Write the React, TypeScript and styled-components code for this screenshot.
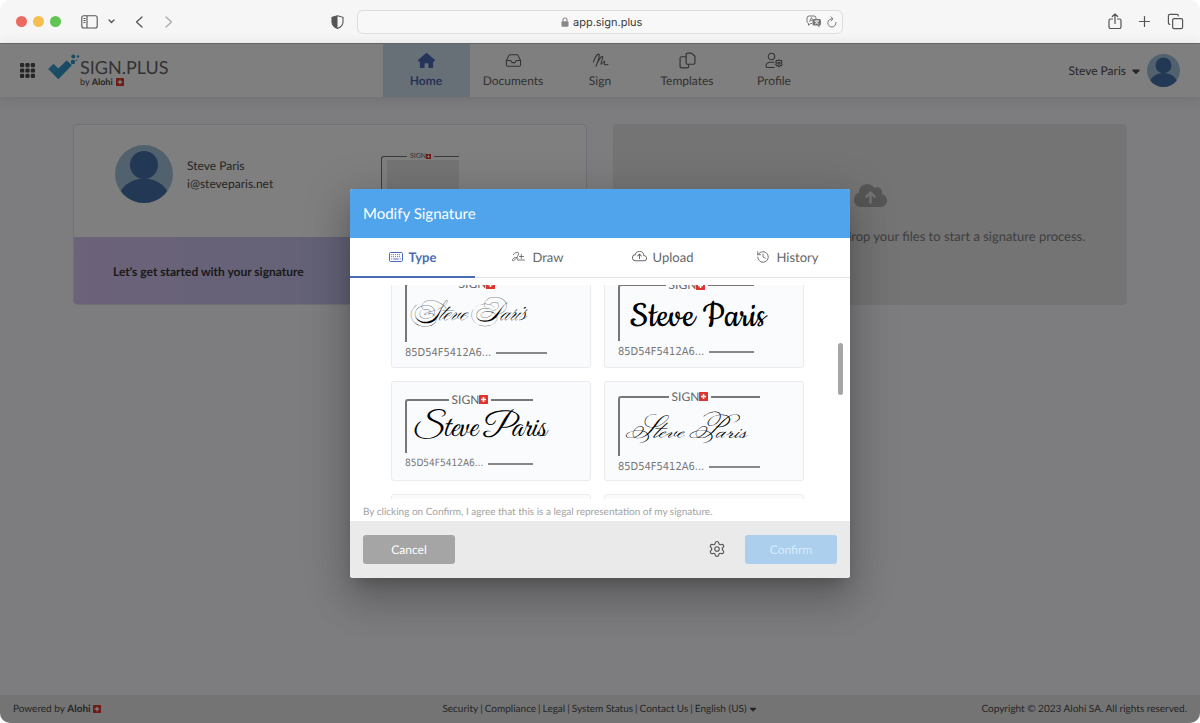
import React, { useLayoutEffect, useRef, useState } from "react";
import styled, { createGlobalStyle, css } from "styled-components";
import { Settings, History, Copy, Inbox, Plus } from "lucide-react";
import { BsCloudArrowUp } from "react-icons/bs";
import { FaCloudArrowUp, FaHouse, FaCaretDown } from "react-icons/fa6";

const Global = createGlobalStyle`
  * { box-sizing: border-box; }
  html, body { margin: 0; background: #fff; }
  body {
    font-family: Lato, "Liberation Sans", sans-serif;
    font-size: 12px;
    color: #4c4c4c;
    text-rendering: geometricPrecision;
  }
  button, input { font: inherit; color: inherit; text-rendering: inherit; }
  button { border: 0; padding: 0; background: none; cursor: pointer; }
  a { color: inherit; text-decoration: none; }
  svg { display: block; flex: none; }
`;

const Window = styled.div`
  display: flex;
  flex-direction: column;
  min-height: 100vh;
  border-radius: 10px;
  overflow: hidden;
`;

/* ---------- browser chrome ---------- */

const Toolbar = styled.div`
  display: grid;
  grid-template-columns: 1fr minmax(200px, 486px) 1fr;
  align-items: center;
  height: 43px;
  padding: 0 16px;
  background: #f6f6f6;
  color: #555;
`;

const ToolbarSide = styled.div<{ $end?: boolean }>`
  display: flex;
  align-items: center;
  ${(p) => p.$end && css`justify-content: flex-end; gap: 14px;`}
`;

const Lights = styled.div`
  display: flex;
  gap: 6px;
  margin-right: 20px;
`;

const Light = styled.span<{ $color: string }>`
  width: 11px;
  height: 11px;
  border-radius: 50%;
  background: ${(p) => p.$color};
`;

const ToolButton = styled.button<{ $faint?: boolean; $left?: number; $right?: number }>`
  display: flex;
  margin-left: ${(p) => p.$left ?? 0}px;
  margin-right: ${(p) => p.$right ?? 0}px;
  color: ${(p) => (p.$faint ? "#aaa" : "#555")};
`;

const Spacer = styled.span`
  flex: 1;
`;

const AddressBar = styled.div`
  display: flex;
  align-items: center;
  height: 24px;
  padding: 0 5px 0 42px;
  border: 1px solid #dfdadc;
  border-radius: 6px;
  background: #f9f8f9;
`;

const Address = styled.label`
  display: flex;
  flex: 1;
  align-items: center;
  justify-content: center;
  gap: 4px;
`;

const AddressInput = styled.input`
  width: 72px;
  padding: 0;
  border: 0;
  outline: 0;
  background: none;
  font-family: Inter, sans-serif;
  font-size: 11px;
  color: #3a3a3a;
`;

/* ---------- application ---------- */

const AppArea = styled.div`
  position: relative;
  display: flex;
  flex: 1;
  flex-direction: column;
  background: #fafafe;
`;

const Header = styled.header`
  display: grid;
  grid-template-columns: 1fr auto 1fr;
  height: 54px;
  padding: 0 20px;
  border-top: 1px solid #ccc;
  background: #fff;
  box-shadow: 0 2px 12px rgba(0, 0, 0, 0.12);
`;

const HeaderSide = styled.div<{ $end?: boolean }>`
  display: flex;
  align-items: center;
  gap: ${(p) => (p.$end ? 5 : 13)}px;
  justify-content: ${(p) => (p.$end ? "flex-end" : "flex-start")};
`;

const Brand = styled.a`
  display: flex;
  align-items: center;
`;

const BrandText = styled.span`
  display: flex;
  flex-direction: column;
  padding-top: 4px;
`;

const BrandName = styled.span`
  font-size: 18px;
  line-height: 18px;
  color: #666;
`;

const BrandBy = styled.span`
  display: flex;
  align-items: center;
  gap: 3px;
  font-size: 9px;
  line-height: 12px;
`;

const Nav = styled.nav`
  display: flex;
`;

const NavItem = styled.a<{ $active?: boolean }>`
  display: flex;
  flex-direction: column;
  align-items: center;
  gap: 4px;
  width: 87px;
  padding-top: 8px;
  font-size: 12px;
  line-height: 15px;
  color: #666;
  ${(p) => p.$active && css`
    background: #cfe0ee;
    color: #4a68b5;
    font-weight: 700;
  `}
`;

const UserMenu = styled.button`
  display: flex;
  align-items: center;
  gap: 4px;
  font-size: 12px;
`;

const Main = styled.main`
  display: grid;
  grid-template-columns: 1fr 1fr;
  align-items: start;
  gap: 26px;
  flex: 1;
  padding: 27px 73px;
`;

const ProfileCard = styled.section`
  height: 181px;
  border-radius: 4px;
  overflow: hidden;
  background: #fff;
  border: 1px solid #e2e2ea;
`;

const ProfileTop = styled.div`
  display: flex;
  align-items: flex-start;
  height: 112px;
  padding: 20px 41px;
`;

const ProfileText = styled.div`
  display: flex;
  flex-direction: column;
  width: 208px;
  padding: 12px 0 0 14px;
  line-height: 18px;
`;

const Preview = styled.div`
  width: 78px;
  padding-top: 11px;
`;

const PreviewBlank = styled.div`
  height: 48px;
  margin-left: 5px;
  background: #e8e8e8;
`;

const Banner = styled.div`
  display: flex;
  align-items: center;
  height: 68px;
  padding: 0 39px;
  background: linear-gradient(90deg, #d8c4f4, #b8c6e8);
  font-weight: 700;
  color: #333;
`;

const DropZone = styled.button`
  display: flex;
  flex-direction: column;
  align-items: center;
  gap: 14px;
  height: 181px;
  padding-top: 55px;
  border-radius: 4px;
  background: #e9e9e9;
  font-size: 13px;
  line-height: 20px;
  color: #808080;
`;

const UploadCloud = styled(FaCloudArrowUp)`
  width: 33px;
  height: 33px;
  color: #acacac;
`;

const Footer = styled.footer`
  display: grid;
  grid-template-columns: 1fr auto 1fr;
  align-items: center;
  height: 28px;
  padding: 0 13px 1px;
  background: #e8e8e8;
  font-size: 10px;
`;

const FooterPart = styled.div<{ $end?: boolean }>`
  display: flex;
  align-items: center;
  gap: 2px;
  justify-content: ${(p) => (p.$end ? "flex-end" : "flex-start")};
`;

const FooterButton = styled.button`
  display: flex;
  align-items: center;
  gap: 1px;
`;

/* ---------- dialog ---------- */

const Backdrop = styled.div`
  position: absolute;
  inset: 0;
  display: flex;
  align-items: center;
  justify-content: center;
  background: rgba(0, 0, 0, 0.5);
`;

const Dialog = styled.div`
  width: 500px;
  max-width: 100%;
  border-radius: 3px;
  overflow: hidden;
  background: #fff;
  box-shadow: 0 11px 15px -7px rgba(0, 0, 0, 0.2), 0 24px 38px 3px rgba(0, 0, 0, 0.14),
    0 9px 46px 8px rgba(0, 0, 0, 0.12);
`;

const DialogTitle = styled.h2`
  margin: 0;
  padding: 1px 13px 0;
  background: #4fa4ec;
  color: #fff;
  font-size: 15px;
  font-weight: 400;
  line-height: 48px;
`;

const Tabs = styled.div`
  display: grid;
  grid-template-columns: repeat(4, 1fr);
  height: 40px;
  border-bottom: 1px solid #e4e4e4;
`;

const Tab = styled.button<{ $active: boolean }>`
  display: flex;
  align-items: center;
  justify-content: center;
  gap: 6px;
  height: 40px;
  border-bottom: 2px solid ${(p) => (p.$active ? "#4a6bb5" : "transparent")};
  font-size: 13px;
  font-weight: ${(p) => (p.$active ? 700 : 400)};
  color: ${(p) => (p.$active ? "#4a6bb5" : "#666")};
`;

const ListRow = styled.div`
  display: flex;
  height: 214px;
  margin-top: 7px;
  padding: 0 7px 0 41px;
`;

const List = styled.div`
  display: grid;
  grid-template-columns: 1fr 1fr;
  grid-auto-rows: 100px;
  gap: 13px;
  flex: 1;
  overflow-y: auto;
  scrollbar-width: none;
`;

const Track = styled.div`
  width: 5px;
  margin-left: 34px;
  padding-top: 58px;
`;

const Thumb = styled.div`
  height: 52px;
  border-radius: 3px;
  background: #a6a6a6;
`;

const Card = styled.button`
  display: flex;
  flex-direction: column;
  justify-content: center;
  padding: 8px 13px 0;
  border: 1px solid #ebebef;
  border-radius: 3px;
  background: #fafbfd;
  text-align: left;
`;

const Frame = styled.span<{ $width: number }>`
  display: block;
  width: ${(p) => p.$width}px;
`;

const Outline = styled.span<{ $height: number; $thin?: boolean }>`
  display: flex;
  flex-direction: column;
  height: ${(p) => p.$height}px;
  border: solid #777;
  border-width: ${(p) => (p.$thin ? "1px 0 0 1px" : "2px 0 0 2px")};
  border-top-left-radius: 3px;
`;

const Mark = styled.span<{ $small?: boolean; $bg: string }>`
  display: flex;
  align-items: center;
  align-self: center;
  padding: 0 3px;
  margin-top: ${(p) => (p.$small ? -5 : -8)}px;
  background: ${(p) => p.$bg};
  font-size: ${(p) => (p.$small ? 7 : 12)}px;
  line-height: ${(p) => (p.$small ? 8 : 14)}px;
  color: #666;
`;

const SignedName = styled.span<{ $font: string; $size: number; $indent: number }>`
  display: flex;
  align-items: center;
  flex: 1;
  padding-left: ${(p) => p.$indent}px;
  white-space: nowrap;
  font-family: ${(p) => p.$font}, "Liberation Serif", serif;
  font-size: ${(p) => p.$size}px;
  line-height: 40px;
  color: #000;
`;

const HashRow = styled.span<{ $size: number }>`
  display: flex;
  align-items: center;
  gap: 5px;
  margin-top: 4px;
  font-family: "DejaVu Sans Condensed", "Noto Sans", sans-serif;
  font-size: ${(p) => p.$size}px;
  line-height: 14px;
  color: #777;
`;

const Rule = styled.span`
  flex: 1;
  height: 2px;
  background: #888;
`;

const Consent = styled.p`
  margin: 0;
  padding: 4px 13px 0;
  font-size: 10px;
  line-height: 18px;
  color: #a2a2a2;
`;

const Actions = styled.div`
  display: flex;
  align-items: center;
  gap: 19px;
  height: 57px;
  padding: 0 13px;
  background: #eaeaea;
`;

const Action = styled.button<{ $primary?: boolean }>`
  width: 92px;
  height: 29px;
  border-radius: 3px;
  background: ${(p) => (p.$primary ? "#abcfec" : "#a5a5a5")};
  color: ${(p) => (p.$primary ? "#d9ecfb" : "#fff")};
`;

const IconButton = styled.button`
  display: flex;
  color: #555;
`;

/* ---------- drawings ---------- */

const SwissPlus = ({ size = 9 }: { size?: number }) => (
  <svg width={size} height={size} viewBox="0 0 9 9">
    <rect width="9" height="9" rx="0.5" fill="#e0352f" />
    <path d="M4.5 2v5M2 4.5h5" stroke="#fff" strokeWidth="1.5" />
  </svg>
);

const Avatar = ({ size }: { size: number }) => (
  <svg width={size} height={size} viewBox="0 0 58 58">
    <defs>
      <clipPath id={`disc${size}`}><circle cx="29" cy="29" r="29" /></clipPath>
    </defs>
    <g clipPath={`url(#disc${size})`}>
      <rect width="58" height="58" fill="#a4c3dc" />
      <circle cx="29" cy="20" r="14" fill="#4671a8" />
      <ellipse cx="29" cy="56" rx="26" ry="22.5" fill="#4671a8" />
    </g>
  </svg>
);

const SidebarIcon = () => (
  <svg width="17" height="14" viewBox="0 0 17 14" fill="none" stroke="currentColor" strokeWidth="1.1">
    <rect x="0.8" y="0.8" width="15.4" height="12.2" rx="2" />
    <path d="M6 1v12M2.5 3.5h2M2.5 5.5h2M2.5 7.5h2" />
  </svg>
);

const Chevron = ({ d, w, h }: { d: string; w: number; h: number }) => (
  <svg width={w} height={h} viewBox={`0 0 ${w} ${h}`} fill="none" stroke="currentColor" strokeWidth="1.3" strokeLinecap="round" strokeLinejoin="round">
    <path d={d} />
  </svg>
);

const ShieldIcon = () => (
  <svg width="13" height="14" viewBox="0 0 13 14">
    <path d="M6.5.8 12 2.3v4.6c0 3-2 5-5.5 6.5C3 11.9 1 9.9 1 6.9V2.3z" fill="none" stroke="currentColor" strokeWidth="1.1" />
    <path d="M6.5.8v12.6C3 11.9 1 9.9 1 6.9V2.3z" fill="currentColor" />
  </svg>
);

const LockIcon = () => (
  <svg width="8" height="10" viewBox="0 0 8 10">
    <rect x="0.5" y="4.2" width="7" height="5.6" rx="1" fill="#888" />
    <path d="M2 4.5V3a2 2 0 0 1 4 0v1.5" fill="none" stroke="#888" strokeWidth="1.1" />
  </svg>
);

const TranslateIcon = () => (
  <svg width="16" height="13" viewBox="0 0 16 13" fill="none">
    <path d="M3 1h5a2 2 0 0 1 2 2v1M6 8.5H4.5L2.5 10.3V8.3A2 2 0 0 1 1 6.5V3a2 2 0 0 1 2-2" stroke="#777" />
    <path d="m3.5 6.800 2-4.300 1.300 3M4.200 5.400h2" stroke="#777" strokeWidth="0.9" />
    <path d="M8 4h5.500A1.500 1.500 0 0 1 15 5.500V9a1.500 1.500 0 0 1-1.500 1.500v2L11.500 10.500H8A1.500 1.500 0 0 1 6.500 9V5.500A1.500 1.500 0 0 1 8 4z" fill="#777" />
    <path d="M8.500 6h4.500M10.700 5v1M12 6c-.5 1.500-1.500 2.500-3 3M9.500 6c.5 1.500 1.500 2.500 3 3" stroke="#fff" strokeWidth="0.8" />
  </svg>
);

const ReloadIcon = () => (
  <svg width="10" height="12" viewBox="0 0 10 12" fill="none" stroke="#777" strokeLinecap="round">
    <path d="M9 6.5A4.100 4.100 0 1 1 5.500 2.800M4 .8l2 2-2 2" />
  </svg>
);

const ShareIcon = () => (
  <svg width="14" height="17" viewBox="0 0 14 17" fill="none" stroke="currentColor" strokeWidth="1.2" strokeLinecap="round" strokeLinejoin="round">
    <path d="M4.500 6H2.500A1.500 1.500 0 0 0 1 7.500v6.500a1.500 1.500 0 0 0 1.500 1.500h9A1.500 1.500 0 0 0 13 14V7.500A1.500 1.500 0 0 0 11.500 6h-2M7 10.500V1M4.300 3.500 7 1l2.700 2.500" />
  </svg>
);

const AppsIcon = () => (
  <svg width="15" height="15" viewBox="0 0 15 15" fill="#4c4c4c">
    {[0, 5.4, 10.8].map((y) => [0, 5.4, 10.8].map((x) => (
      <rect key={`${x}-${y}`} x={x} y={y} width="4.2" height="4.2" rx="1.2" />
    )))}
  </svg>
);

const LogoIcon = () => (
  <svg width="32" height="33" viewBox="0 0 32 33">
    <path d="M1.2 15 5.500 10.800 10.300 15.500 18.700 7.200 23 11.300 10.300 24.200z" fill="#37a0cf" stroke="#37a0cf" strokeWidth="1.5" strokeLinejoin="round" />
    <path d="M10.300 15.500 18.700 7.200 23 11.300 10.300 24.200 6 20z" fill="#3197c8" />
    <g fill="#3497c6">
      <circle cx="25.3" cy="2.5" r="2" />
      <circle cx="30" cy="2.5" r="1.2" />
      <circle cx="25" cy="8" r="2.2" />
      <circle cx="28.5" cy="6.3" r="0.8" />
    </g>
  </svg>
);

const SignIcon = () => (
  <svg width="17" height="17" viewBox="0 0 16 16" fill="none" stroke="currentColor" strokeLinecap="round" strokeLinejoin="round">
    <path d="M1.200 9.500C2.500 6 4.500 2 6.300 2c1.600 0-.8 7.500-2.600 11.500C5.500 9 8.500 3.500 10 4.200c1.300.7-2.400 6.500-1.500 7.200.7.500 2.500-3 3.300-2.600.8.500-1 2.700 0 3.200.7.300 2-.2 3.200-.2" />
  </svg>
);

const TemplatesIcon = () => (
  <svg width="17" height="17" viewBox="0 0 16 16" fill="none" stroke="currentColor" strokeWidth="1.1" strokeLinejoin="round">
    <path d="M8 1h3.700L15 4v6.200A1.300 1.300 0 0 1 13.700 11.500H8A1.300 1.300 0 0 1 6.700 10.200V2.300A1.300 1.300 0 0 1 8 1z" />
    <path d="M6.700 4.500H2.300A1.300 1.300 0 0 0 1 5.800v8A1.300 1.300 0 0 0 2.300 15h5.500A1.300 1.300 0 0 0 9 13.800v-2.300" />
  </svg>
);

const ProfileIcon = () => (
  <svg width="18" height="17" viewBox="0 0 18 16" fill="none" stroke="currentColor" strokeWidth="1.1" strokeLinecap="round" strokeLinejoin="round">
    <circle cx="6.5" cy="4" r="3.2" />
    <path d="M9 9.800H5A4 4 0 0 0 1 13.800c0 .7.500 1.200 1.200 1.200H9" />
    <path d="m14 7.200 1.100.9 1.400-.1.500 1.400-.7 1.100.7 1.200-.5 1.400-1.400-.1-1.100 1.500-1.200-1.400-1.500 0-.5-1.400.8-1.200-.8-1.100.6-1.400 1.400.1z" />
    <circle cx="14" cy="10.7" r="1" />
  </svg>
);

const KeyboardIcon = () => (
  <svg width="14" height="10" viewBox="0 0 14 10" fill="none" stroke="currentColor">
    <rect x="0.5" y="0.5" width="13" height="9" rx="1.2" />
    <path d="M2.200 2.700h9.800M2.200 4.700h9.800" strokeDasharray="1 0.95" />
    <path d="M2.200 7h1M4.200 7h5.600M10.800 7h1" />
  </svg>
);

const DrawIcon = () => (
  <svg width="15" height="12" viewBox="0 0 15 12" fill="none" stroke="currentColor" strokeWidth="0.9" strokeLinecap="round" strokeLinejoin="round">
    <path d="M2.500 3.500C3.500 1.500 7 .5 7.500 2c.6 2-3.500 8-5.500 7.800C.3 9.500 2 6.800 4.500 6.500c2-.2 2.800.5 2.200 2-.4 1 .6 1 1.500.5h5.300M8.500 5.500h4M10.300 3.500v4" />
  </svg>
);

/* ---------- content ---------- */

type Signature = {
  width: number;
  height: number;
  hashSize: number;
  font: string;
  fontSize: number;
  indent: number;
};

const signatures: Signature[] = [
  { width: 142, height: 59, hashSize: 11, font: "Ballet", fontSize: 24, indent: 6 },
  { width: 136, height: 57, hashSize: 11, font: "Cookie", fontSize: 40, indent: 10 },
  { width: 128, height: 54, hashSize: 10, font: '"Great Vibes"', fontSize: 33, indent: 6 },
  { width: 142, height: 60, hashSize: 11, font: '"Monsieur La Doulaise"', fontSize: 29, indent: 6 },
];

const SignatureCard = ({ s }: { s: Signature }) => (
  <Card>
    <Frame $width={s.width}>
      <Outline $height={s.height}>
        <Mark $bg="#fafbfd">SIGN<SwissPlus /></Mark>
        <SignedName $font={s.font} $size={s.fontSize} $indent={s.indent}>Steve Paris</SignedName>
      </Outline>
      <HashRow $size={s.hashSize}>85D54F5412A6...<Rule /></HashRow>
    </Frame>
  </Card>
);

const navItems = [
  { label: "Home", icon: <FaHouse size={17} /> },
  { label: "Documents", icon: <Inbox size={17} strokeWidth={1.5} /> },
  { label: "Sign", icon: <SignIcon /> },
  { label: "Templates", icon: <TemplatesIcon /> },
  { label: "Profile", icon: <ProfileIcon /> },
];

const tabs = [
  { label: "Type", icon: <KeyboardIcon /> },
  { label: "Draw", icon: <DrawIcon /> },
  { label: "Upload", icon: <BsCloudArrowUp size={15} /> },
  { label: "History", icon: <History size={14} strokeWidth={1.5} /> },
];

const footerLinks = ["Security", "Compliance", "Legal", "System Status", "Contact Us"];

export default function App() {
  const [tab, setTab] = useState("Type");
  const list = useRef<HTMLDivElement>(null);

  useLayoutEffect(() => {
    if (list.current) list.current.scrollTop = 17;
  }, []);

  return (
    <Window>
      <Global />
      <Toolbar>
        <ToolbarSide>
          <Lights>
            <Light $color="#ec6a5e" />
            <Light $color="#f4bf4f" />
            <Light $color="#61c554" />
          </Lights>
          <ToolButton aria-label="Sidebar"><SidebarIcon /></ToolButton>
          <ToolButton aria-label="Sidebar options" $left={10}><Chevron w={7} h={5} d="M1 1l2.5 2.5L6 1" /></ToolButton>
          <ToolButton aria-label="Back" $left={20}><Chevron w={8} h={12} d="M7 1 1.5 6 7 11" /></ToolButton>
          <ToolButton aria-label="Forward" $left={22} $faint><Chevron w={8} h={12} d="M1 1l5.5 5L1 11" /></ToolButton>
          <Spacer />
          <ToolButton aria-label="Privacy report" $right={13}><ShieldIcon /></ToolButton>
        </ToolbarSide>
        <AddressBar>
          <Address>
            <LockIcon />
            <AddressInput aria-label="Address" defaultValue="app.sign.plus" />
          </Address>
          <ToolButton aria-label="Translate" $right={5}><TranslateIcon /></ToolButton>
          <ToolButton aria-label="Reload"><ReloadIcon /></ToolButton>
        </AddressBar>
        <ToolbarSide $end>
          <ToolButton aria-label="Share"><ShareIcon /></ToolButton>
          <ToolButton aria-label="New tab"><Plus size={17} strokeWidth={1.7} /></ToolButton>
          <ToolButton aria-label="Tab overview"><Copy size={17} strokeWidth={1.7} /></ToolButton>
        </ToolbarSide>
      </Toolbar>

      <AppArea>
        <Header>
          <HeaderSide>
            <IconButton aria-label="Apps"><AppsIcon /></IconButton>
            <Brand href="#">
              <LogoIcon />
              <BrandText>
                <BrandName>SIGN.PLUS</BrandName>
                <BrandBy><span>by <b>Alohi</b></span><SwissPlus size={8} /></BrandBy>
              </BrandText>
            </Brand>
          </HeaderSide>
          <Nav>
            {navItems.map((n, i) => (
              <NavItem key={n.label} href="#" $active={i === 0}>{n.icon}{n.label}</NavItem>
            ))}
          </Nav>
          <HeaderSide $end>
            <UserMenu>Steve Paris<FaCaretDown size={12} /></UserMenu>
            <Avatar size={33} />
          </HeaderSide>
        </Header>

        <Main>
          <ProfileCard>
            <ProfileTop>
              <Avatar size={58} />
              <ProfileText>
                <span>Steve Paris</span>
                <span>i@steveparis.net</span>
              </ProfileText>
              <Preview>
                <Outline $height={60} $thin>
                  <Mark $small $bg="#fff">SIGN<SwissPlus size={5} /></Mark>
                  <PreviewBlank />
                </Outline>
              </Preview>
            </ProfileTop>
            <Banner>Let's get started with your signature</Banner>
          </ProfileCard>
          <DropZone>
            <UploadCloud />
            <span>Select your documents or drag &amp; drop your files to start a signature process.</span>
          </DropZone>
        </Main>

        <Footer>
          <FooterPart><span>Powered by <b>Alohi</b></span><SwissPlus size={8} /></FooterPart>
          <FooterPart>
            {footerLinks.map((l) => (
              <React.Fragment key={l}><a href="#">{l}</a><span>|</span></React.Fragment>
            ))}
            <FooterButton>English (US)<FaCaretDown size={10} /></FooterButton>
          </FooterPart>
          <FooterPart $end>Copyright © 2023 Alohi SA. All rights reserved.</FooterPart>
        </Footer>

        <Backdrop>
          <Dialog role="dialog" aria-labelledby="dialog-title">
            <DialogTitle id="dialog-title">Modify Signature</DialogTitle>
            <Tabs role="tablist">
              {tabs.map((t) => (
                <Tab key={t.label} role="tab" aria-selected={t.label === tab} $active={t.label === tab} onClick={() => setTab(t.label)}>
                  {t.icon}{t.label}
                </Tab>
              ))}
            </Tabs>
            <ListRow>
              <List ref={list}>
                {signatures.map((s, i) => <SignatureCard key={i} s={s} />)}
                <Card aria-label="Signature style 5" />
                <Card aria-label="Signature style 6" />
              </List>
              <Track><Thumb /></Track>
            </ListRow>
            <Consent>By clicking on Confirm, I agree that this is a legal representation of my signature.</Consent>
            <Actions>
              <Action>Cancel</Action>
              <Spacer />
              <IconButton aria-label="Settings"><Settings size={18} strokeWidth={1.5} /></IconButton>
              <Action $primary>Confirm</Action>
            </Actions>
          </Dialog>
        </Backdrop>
      </AppArea>
    </Window>
  );
}
